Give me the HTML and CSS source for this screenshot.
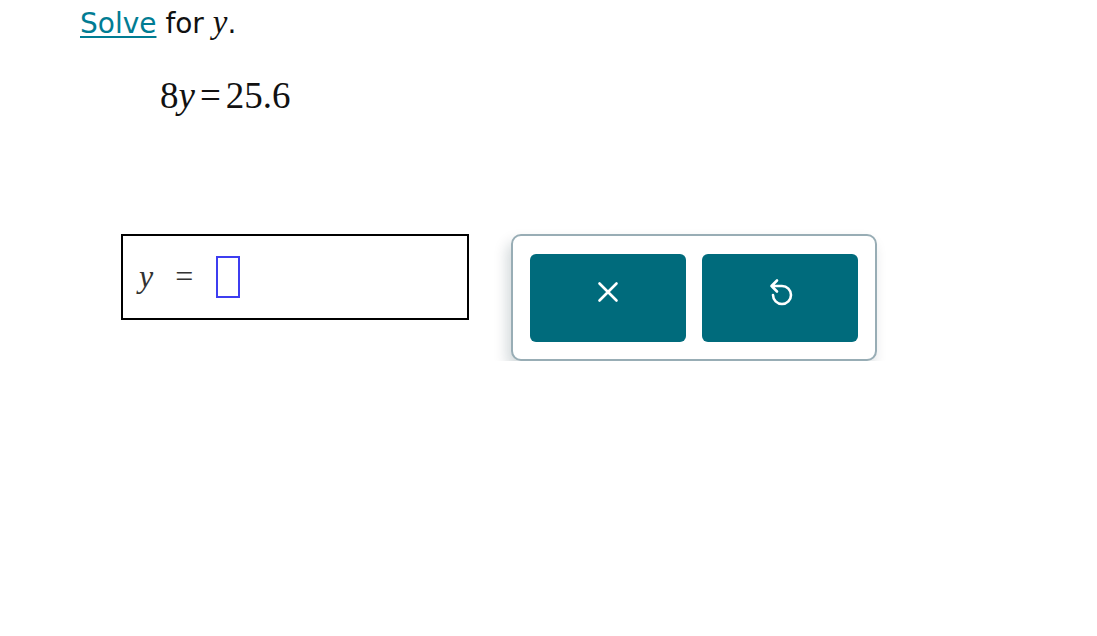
FILE: index.html
```html
<!DOCTYPE html>
<html lang="en">
<head>
    <meta charset="UTF-8">
    <meta name="viewport" content="width=device-width, initial-scale=1.0">
    <title>Solve for y</title>
    <link rel="stylesheet" href="styles.css">
</head>
<body>
    <div class="page">
        <p class="prompt"><a href="#" class="link">Solve</a> for <span class="var">y</span>.</p>

        <div class="equation">
            <span>8</span><span class="var">y</span><span class="eq">=</span><span>25.6</span>
        </div>

        <div class="answer-row">
            <div class="answer-box">
                <span class="var">y</span>
                <span class="eq">=</span>
                <span class="slot"></span>
            </div>

            <div class="tools">
                <button class="tool" type="button" aria-label="Clear">
                    <svg class="icon-x" width="20" height="20" viewBox="0 0 20 20">
                        <path d="M1.5 1.5L18.5 18.5M18.5 1.5L1.5 18.5" />
                    </svg>
                </button>
                <button class="tool" type="button" aria-label="Undo">
                    <svg class="icon-undo" width="24" height="24" viewBox="0 0 24 24">
                        <path d="M5 15a9 9 0 1 0 9-9H3.5M9 0.5L3.5 6 9 11.5" />
                    </svg>
                </button>
            </div>
        </div>
    </div>
</body>
</html>
```

FILE: styles.css
```css
body {
    margin: 0;
    background-color: #ffffff;
    font-family: "DejaVu Sans", Verdana, sans-serif;
    color: #111;
}
.page {
    padding: 6px 0 0 80px;
}
.prompt {
    margin: 0;
    font-size: 28px;
    line-height: 1.2;
}
.link {
    color: #007c93;
    text-decoration: underline;
    text-underline-offset: 3px;
}
.var {
    font-family: "Liberation Serif", "Times New Roman", serif;
    font-style: italic;
}
.prompt .var {
    font-size: 33px;
    line-height: 1;
}
.equation {
    margin: 33px 0 0 80px;
    font-family: "Liberation Serif", "Times New Roman", serif;
    font-size: 37px;
    line-height: 1.2;
}
.equation .eq {
    margin: 0 5px;
}
.answer-row {
    display: flex;
    align-items: flex-start;
    gap: 42px;
    margin: 116px 0 0 41px;
}
.answer-box {
    box-sizing: border-box;
    width: 348px;
    height: 86px;
    border: 2px solid #000;
    display: flex;
    align-items: center;
    padding-left: 16px;
    font-family: "Liberation Serif", "Times New Roman", serif;
    font-size: 32px;
    color: #333;
}
.answer-box .var {
    margin-right: 22px;
}
.answer-box .eq {
    margin-right: 23px;
}
.slot {
    box-sizing: border-box;
    width: 24px;
    height: 42px;
    border: 2px solid #3d3df0;
}
.tools {
    display: flex;
    gap: 16px;
    padding: 18px 17px 17px;
    border: 2px solid #98adb5;
    border-radius: 10px;
    background: #fff;
    box-shadow: -4px 8px 14px rgba(0, 40, 50, 0.18);
}
.tool {
    width: 156px;
    height: 88px;
    padding: 0 0 12px;
    border: none;
    border-radius: 6px;
    background-color: #006b7c;
    display: flex;
    align-items: center;
    justify-content: center;
    cursor: pointer;
}
.tool svg {
    overflow: visible;
    fill: none;
    stroke: #ffffff;
    stroke-width: 2.6;
    stroke-linecap: round;
    stroke-linejoin: round;
}
```
